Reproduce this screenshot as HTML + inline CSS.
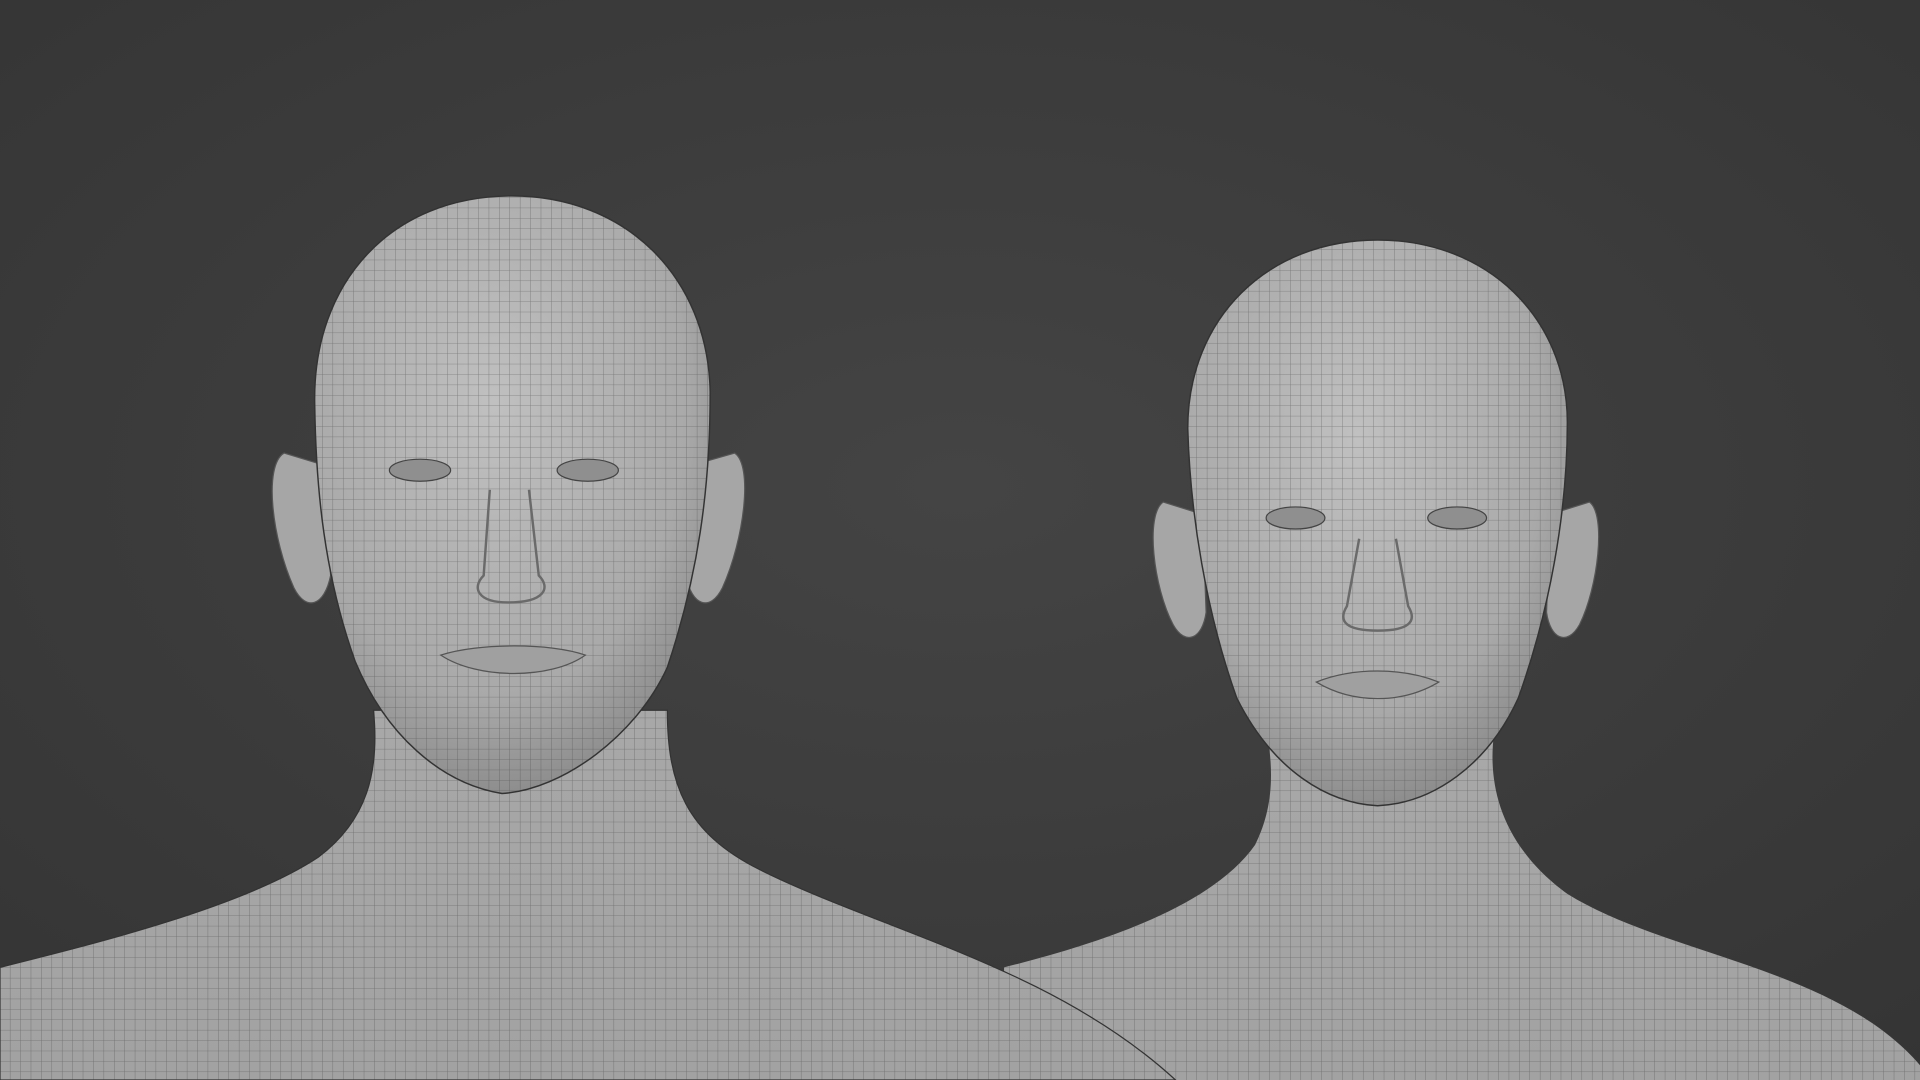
<!DOCTYPE html>
<html><head><meta charset="utf-8"><style>
html,body{margin:0;padding:0;width:1920px;height:1080px;overflow:hidden;background:#3c3c3c}
svg{display:block}
</style></head><body>
<svg width="1920" height="1080" viewBox="0 0 1568 882" preserveAspectRatio="none" xmlns="http://www.w3.org/2000/svg">
<defs>
<radialGradient id="bg" cx="50%" cy="45%" r="75%">
<stop offset="0" stop-color="#444"/><stop offset="1" stop-color="#343434"/></radialGradient>
<pattern id="grid" width="8.5" height="8.5" patternUnits="userSpaceOnUse">
<path d="M8.5 0V8.5M0 8.5H8.5" stroke="#3a3a3a" stroke-width="0.7" stroke-opacity="0.5" fill="none"/></pattern>
<radialGradient id="skin" cx="45%" cy="35%" r="70%">
<stop offset="0" stop-color="#c0c0c0"/><stop offset="0.7" stop-color="#a9a9a9"/><stop offset="1" stop-color="#858585"/></radialGradient>
<linearGradient id="body" x1="0" y1="0" x2="0" y2="1">
<stop offset="0" stop-color="#a8a8a8"/><stop offset="1" stop-color="#a2a2a2"/></linearGradient>
</defs>
<rect width="1568" height="882" fill="url(#bg)"/>

<!-- female -->
<g>
<path d="M820 790 C900 770 990 740 1025 690 C1040 660 1040 630 1035 600 L1220 600 C1215 640 1225 690 1280 730 C1360 780 1500 790 1568 870 L1568 882 L820 882 Z" fill="url(#body)"/>
<path d="M820 790 C900 770 990 740 1025 690 C1040 660 1040 630 1035 600 L1220 600 C1215 640 1225 690 1280 730 C1360 780 1500 790 1568 870 L1568 882 L820 882 Z" fill="url(#grid)"/>
<path d="M950 410 C935 420 942 480 958 510 C968 528 982 522 985 500 L982 420 Z M1298 410 C1312 420 1305 480 1290 510 C1280 528 1266 522 1263 500 L1266 420 Z" fill="#a6a6a6" stroke="#555" stroke-width="1"/>
<path d="M1125 196 C1035 196 970 260 970 350 C972 420 985 500 1010 570 C1040 630 1085 656 1125 658 C1170 656 1215 625 1240 570 C1265 500 1280 420 1280 345 C1280 260 1215 196 1125 196 Z" fill="url(#skin)"/>
<path d="M1125 196 C1035 196 970 260 970 350 C972 420 985 500 1010 570 C1040 630 1085 656 1125 658 C1170 656 1215 625 1240 570 C1265 500 1280 420 1280 345 C1280 260 1215 196 1125 196 Z" fill="url(#grid)" stroke="#333" stroke-width="1.2"/>
<ellipse cx="1058" cy="423" rx="24" ry="9" fill="#8f8f8f" stroke="#444"/>
<ellipse cx="1190" cy="423" rx="24" ry="9" fill="#8f8f8f" stroke="#444"/>
<path d="M1110 440 L1100 495 C1092 508 1100 515 1125 515 C1150 515 1158 508 1150 495 L1140 440" fill="none" stroke="#6a6a6a" stroke-width="2"/>
<path d="M1075 557 C1105 545 1145 545 1175 557 C1145 575 1105 575 1075 557 Z" fill="#a0a0a0" stroke="#555"/>
</g>

<!-- male -->
<g>
<path d="M0 790 C80 770 200 740 260 700 C300 670 310 630 305 580 L545 580 C545 640 560 680 620 710 C720 760 860 790 960 882 L0 882 Z" fill="url(#body)" stroke="#333" stroke-width="1"/>
<path d="M0 790 C80 770 200 740 260 700 C300 670 310 630 305 580 L545 580 C545 640 560 680 620 710 C720 760 860 790 960 882 L0 882 Z" fill="url(#grid)"/>
<path d="M232 370 C215 380 222 440 240 480 C250 500 265 495 270 470 L265 380 Z M600 370 C615 380 608 440 590 480 C580 500 565 495 560 470 L565 380 Z" fill="#a6a6a6" stroke="#555" stroke-width="1"/>
<path d="M418 160 C320 160 255 230 257 330 C258 400 265 470 290 540 C315 600 360 640 410 648 C460 645 520 600 545 545 C570 470 580 400 580 320 C578 225 510 160 418 160 Z" fill="url(#skin)"/>
<path d="M418 160 C320 160 255 230 257 330 C258 400 265 470 290 540 C315 600 360 640 410 648 C460 645 520 600 545 545 C570 470 580 400 580 320 C578 225 510 160 418 160 Z" fill="url(#grid)" stroke="#333" stroke-width="1.2"/>
<ellipse cx="343" cy="384" rx="25" ry="9" fill="#8f8f8f" stroke="#444"/>
<ellipse cx="480" cy="384" rx="25" ry="9" fill="#8f8f8f" stroke="#444"/>
<path d="M400 400 L395 470 C385 480 390 492 415 492 C445 492 450 480 440 470 L432 400" fill="none" stroke="#6a6a6a" stroke-width="2"/>
<path d="M360 535 C390 525 450 525 478 535 C450 555 390 555 360 535 Z" fill="#a0a0a0" stroke="#555"/>
</g>
</svg>
</body></html>
